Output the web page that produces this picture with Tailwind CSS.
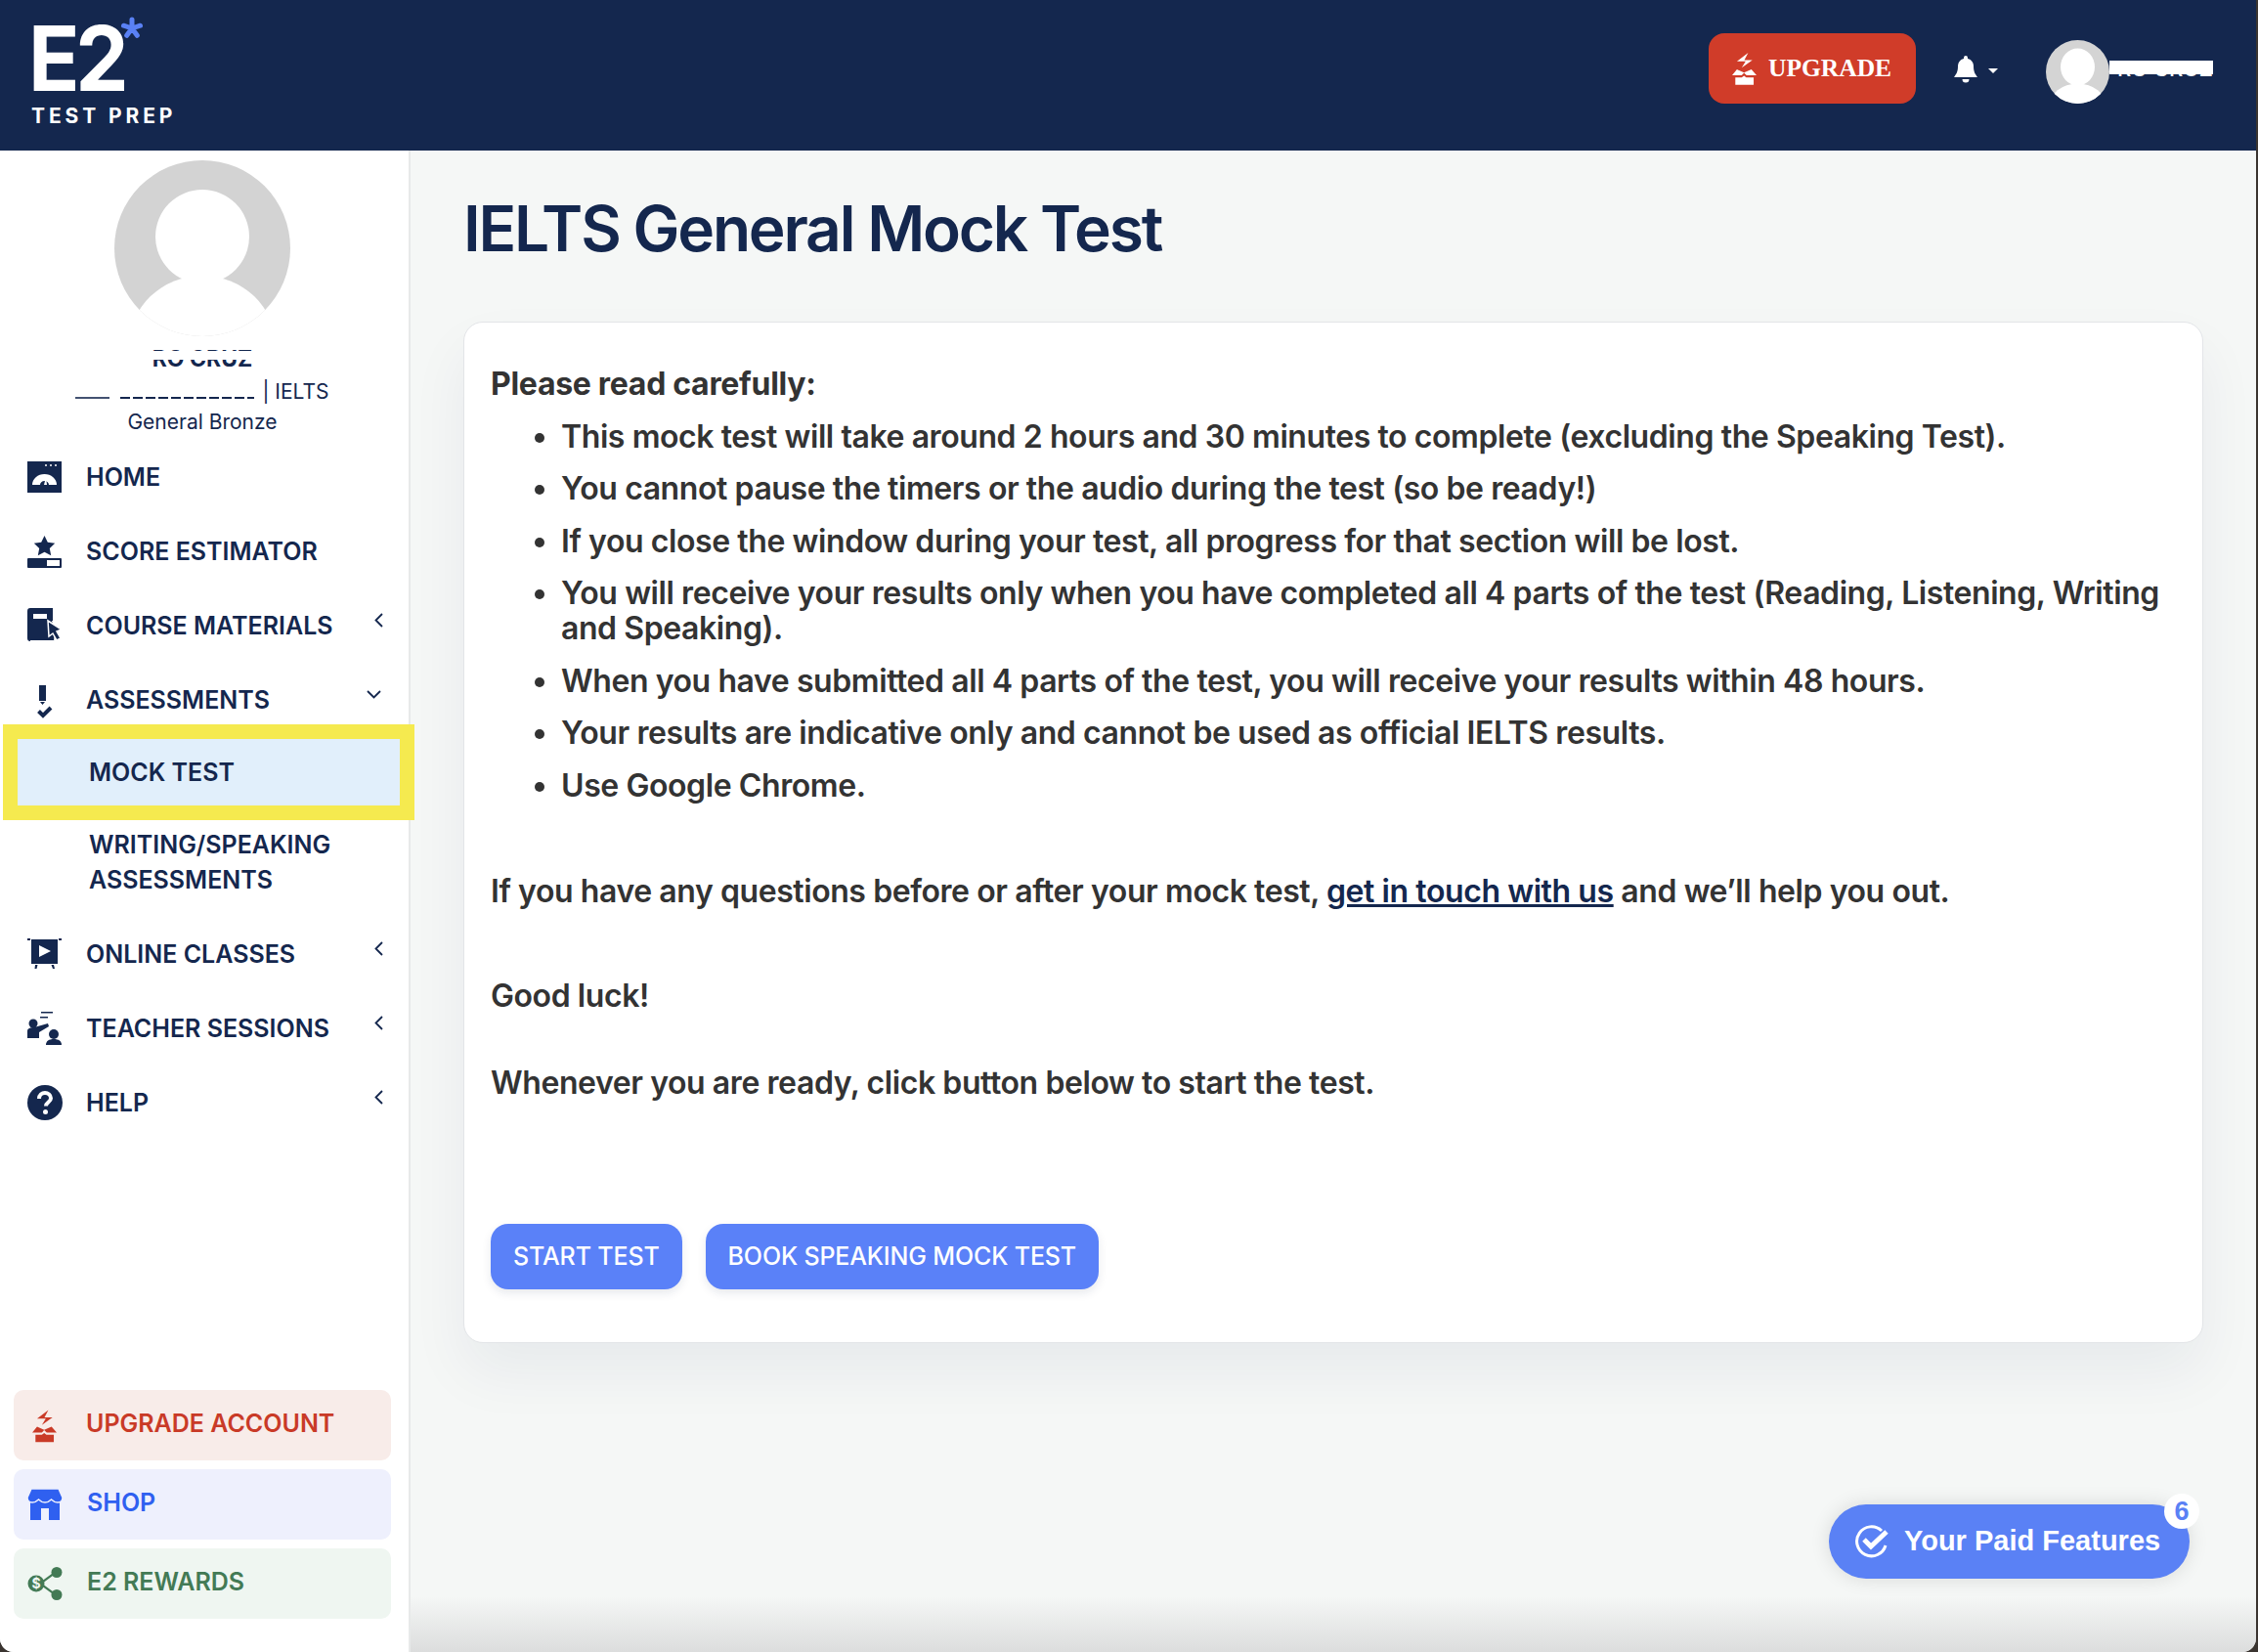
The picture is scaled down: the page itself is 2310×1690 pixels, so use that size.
<!DOCTYPE html>
<html lang="en">
<head>
<meta charset="utf-8">
<title>IELTS General Mock Test</title>
<script src="https://cdn.jsdelivr.net/npm/@tailwindcss/browser@4"></script>
</head>
<body class="w-[2310px] h-[1690px] overflow-hidden bg-[#3a3430] font-['Inter',sans-serif] text-[#14274e]">
<div class="relative flex h-full w-[2308px] flex-col overflow-hidden rounded-b-[14px] bg-[#f5f7f6]">
  <header class="flex h-[154px] shrink-0 items-start justify-between bg-[#14274e] text-white">
    <div class="relative ml-[31px] mt-[22px] flex flex-col">
      <div class="ml-[-2px] h-[76px] origin-left scale-x-[0.94] text-[92px] leading-[76px] font-bold tracking-[-4.500px]">E2</div>
      <svg class="absolute left-[92px] top-[-5px] h-[24px] w-[24px]" viewBox="0 0 24 24" fill="none" stroke="#5a81f5" stroke-width="5" stroke-linecap="round"><path d="M12 12V3M12 12l8.500-2.800M12 12l5.300 7.300M12 12l-5.300 7.300M12 12 3.500 9.200"/></svg>
      <div class="ml-[1px] mt-[9px] whitespace-nowrap text-[21px] leading-[24px] font-bold tracking-[3.900px]">TEST PREP</div>
    </div>
    <div class="flex items-start">
      <a class="mt-[34px] flex h-[72px] w-[212px] items-center rounded-[16px] bg-[#d03c29] pl-[24px] text-white">
        <svg class="mr-[12px] h-[36px] w-[25px]" viewBox="70 62 76 104" fill="#fff"><path d="M120 65 85 92h27l-12 20 33-24h-25zM70 135l15-18 22 10 23-10 16 18h-31l-8-7-7 7zM80 142h20l7-5 7 5h23v23H80z"/></svg>
        <span class="font-['Liberation_Serif',serif] text-[25.500px] font-bold leading-none">UPGRADE</span>
      </a>
      <div class="ml-[39px] mt-[57px] flex items-center">
        <svg class="h-[28px] w-[24px]" viewBox="0 0 24 28" fill="#fff"><path d="M12 0a2 2 0 0 1 2 2v1c4 1 6 4 6 8 0 6 2 8 4 11H0c2-3 4-5 4-11 0-4 2-7 6-8V2a2 2 0 0 1 2-2zM8.500 24h7a3.500 3.500 0 0 1-7 0z"/></svg>
        <span class="ml-[11px] mt-[2px] h-0 w-0 border-x-[5px] border-t-[5px] border-x-transparent border-t-white"></span>
      </div>
      <div class="ml-[49px] mr-[44px] mt-[41px] flex items-start">
        <svg class="h-[65px] w-[65px] shrink-0" viewBox="0 0 130 130"><clipPath id="ha"><circle cx="65" cy="65" r="65"/></clipPath><g clip-path="url(#ha)"><rect width="130" height="130" fill="#d4d4d4"/><ellipse cx="65" cy="55" rx="35" ry="38" fill="#fff"/><ellipse cx="65" cy="135" rx="58" ry="46" fill="#fff"/></g></svg>
        <div class="relative mt-[21px] h-[19px] w-[106px]">
          <span class="absolute left-[8px] top-[-3px] whitespace-nowrap text-[22px] leading-[22px] font-medium">RO CRUZ</span>
          <div class="absolute inset-x-0 top-0 h-[14px] bg-white"></div>
        </div>
      </div>
    </div>
  </header>
  <div class="flex min-h-0 flex-1">
    <aside class="relative flex w-[420px] shrink-0 flex-col border-r-2 border-[#e7e9e9] bg-white">
      <div class="flex w-[414px] flex-col items-center text-center">
        <svg class="mt-[10px] h-[180px] w-[180px]" viewBox="0 0 180 180"><clipPath id="sa"><circle cx="90" cy="90" r="90"/></clipPath><g clip-path="url(#sa)"><rect width="180" height="180" fill="#d3d3d3"/><circle cx="90" cy="78" r="48" fill="#fff"/><ellipse cx="90" cy="190" rx="75" ry="72" fill="#fff"/></g></svg>
        <div class="relative mt-[9px] h-[22px] w-[110px] overflow-hidden">
          <span class="absolute inset-x-0 bottom-[-7px] text-center text-[23px] leading-[30px] font-bold whitespace-nowrap">RO CRUZ</span>
          <div class="absolute inset-x-0 top-[6px] h-[9px] bg-white"></div>
        </div>
        <div class="mt-[10px] w-[300px] text-[21px] leading-[31px]"><span class="inline-block h-[2px] w-[35px] bg-[#14274e]/80 align-baseline"></span><span class="ml-[11px] mr-[8px] inline-block h-[2px] w-[137px] bg-[repeating-linear-gradient(90deg,#14274e_0,#14274e_10px,#ffffff_10px,#ffffff_13px)] align-baseline"></span>| IELTS General Bronze</div>
      </div>
      <nav class="mt-[3px] flex flex-col text-[25px] leading-[36px] font-semibold">
        <a class="flex h-[76px] items-center pl-[28px]"><svg class="mr-[25px] h-[32px] w-[35px] shrink-0" viewBox="0 0 35 32"><rect width="35" height="32" fill="#14274e"/><path d="M5 24a12.500 11 0 0 1 25 0h-8a4.500 4 0 0 0-9 0z" fill="#fff"/><path d="M17 24l2-8 1 8z" fill="#fff"/><circle cx="19" cy="4" r="1" fill="#fff"/><circle cx="24" cy="4" r="1" fill="#fff"/><circle cx="29" cy="4" r="1" fill="#fff"/></svg><span>HOME</span></a>
        <a class="flex h-[76px] items-center pl-[28px]"><svg class="mr-[25px] h-[33px] w-[35px] shrink-0" viewBox="0 0 35 33"><path d="M17.500 0l3.300 6.800 7.400 1-5.400 5.100 1.400 7.400-6.700-3.500-6.700 3.500 1.400-7.400-5.400-5.100 7.400-1z" fill="#14274e"/><rect y="23" width="35" height="10" rx="1" fill="#14274e"/><rect x="20" y="25" width="13" height="6" fill="#fff"/></svg><span>SCORE ESTIMATOR</span></a>
        <a class="relative flex h-[76px] items-center pl-[28px]"><svg class="mr-[24px] h-[36px] w-[36px] shrink-0" viewBox="0 0 36 36"><path d="M3 0h23v13l-1 0 3 10-1 11H3a3 3 0 0 1-3-3V3a3 3 0 0 1 3-3z" fill="#14274e"/><path d="M3 33h24v2H3z" fill="#fff"/><rect x="6" y="6" width="14" height="5" fill="#fff"/><path d="M21 13l14 9-5 2 4 7-4 2-4-7-4 3z" fill="#14274e" stroke="#fff" stroke-width="1.500"/></svg><span>COURSE MATERIALS</span><svg class="absolute right-[26px] top-[25px] h-[15px] w-[9px]" viewBox="0 0 9 15" fill="none" stroke="#14274e" stroke-width="1.800"><path d="M8 1 1.500 7.500 8 14"/></svg></a>
        <a class="relative flex h-[76px] items-center pl-[28px]"><svg class="mr-[25px] h-[34px] w-[35px] shrink-0 translate-y-[2px]" viewBox="0 0 35 34" fill="#14274e"><path d="M12 0h7v16h-7zM13 17h5l-2.500 3z"/><path d="M11.500 26.500l4.500 4.500 8-8" fill="none" stroke="#14274e" stroke-width="4"/></svg><span>ASSESSMENTS</span><svg class="absolute right-[28px] top-[28px] h-[9px] w-[15px]" viewBox="0 0 15 9" fill="none" stroke="#14274e" stroke-width="1.800"><path d="M1 1l6.500 6.500L14 1"/></svg></a>
        <div class="relative z-10 ml-[3px] mt-[-13px] flex h-[98px] w-[421px] items-center border-[15px] border-[#f5ea4f] bg-[#e1effb] pl-[73px]">MOCK TEST</div>
        <a class="block h-[99px] pl-[91px] pt-[7px]">WRITING/SPEAKING<br>ASSESSMENTS</a>
        <a class="relative flex h-[76px] items-center pl-[28px]"><svg class="mr-[25px] h-[32px] w-[35px] shrink-0" viewBox="0 0 35 32"><rect x="4" y="1" width="27" height="25" fill="#14274e"/><rect y="0" width="3" height="2" fill="#14274e"/><rect x="32" y="0" width="3" height="2" fill="#14274e"/><path d="M12 7l12 6-12 6z" fill="#fff"/><path d="M8 27h2.500l-1 4H7.500zM24.500 27H27l1 4h-2z" fill="#14274e"/></svg><span>ONLINE CLASSES</span><svg class="absolute right-[26px] top-[25px] h-[15px] w-[9px]" viewBox="0 0 9 15" fill="none" stroke="#14274e" stroke-width="1.800"><path d="M8 1 1.500 7.500 8 14"/></svg></a>
        <a class="relative flex h-[76px] items-center pl-[28px]"><svg class="mr-[25px] h-[34px] w-[35px] shrink-0" viewBox="0 0 35 34" fill="#14274e"><rect x="14" y="0" width="12" height="1.500"/><rect x="13" y="5" width="8" height="1.500"/><circle cx="6" cy="12" r="4.500"/><path d="M0 27V20c0-3 3-4 7-4l14-4 1 3-10 6v6z"/><circle cx="27" cy="23" r="5"/><path d="M19 34c0-4 3-6 8-6s8 2 8 6z"/></svg><span>TEACHER SESSIONS</span><svg class="absolute right-[26px] top-[25px] h-[15px] w-[9px]" viewBox="0 0 9 15" fill="none" stroke="#14274e" stroke-width="1.800"><path d="M8 1 1.500 7.500 8 14"/></svg></a>
        <a class="relative flex h-[76px] items-center pl-[28px]"><svg class="mr-[24px] h-[36px] w-[36px] shrink-0" viewBox="0 0 36 36"><circle cx="18" cy="18" r="18" fill="#14274e"/><path d="M12 14c0-4 3-6 6-6s6 2 6 5.500c0 4-5 4-5 8" fill="none" stroke="#fff" stroke-width="4"/><circle cx="18.500" cy="27.500" r="2.500" fill="#fff"/></svg><span>HELP</span><svg class="absolute right-[26px] top-[25px] h-[15px] w-[9px]" viewBox="0 0 9 15" fill="none" stroke="#14274e" stroke-width="1.800"><path d="M8 1 1.500 7.500 8 14"/></svg></a>
      </nav>
      <div class="absolute left-[14px] top-[1268px] flex w-[386px] flex-col gap-[9px] text-[25px] font-semibold">
        <a class="flex h-[72px] items-center rounded-[10px] bg-[#f8ece9] pl-[19px] text-[#c93a27]"><svg class="mr-[30px] h-[35px] w-[25px] shrink-0" viewBox="70 62 76 104" fill="#c93a27"><path d="M120 65 85 92h27l-12 20 33-24h-25zM70 135l15-18 22 10 23-10 16 18h-31l-8-7-7 7zM80 142h20l7-5 7 5h23v23H80z"/></svg><span class="mb-[3px]">UPGRADE ACCOUNT</span></a>
        <a class="flex h-[72px] items-center rounded-[10px] bg-[#eef0fd] pl-[14px] text-[#2f60f0]"><svg class="mr-[25px] h-[32px] w-[36px] shrink-0" viewBox="0 0 36 32" fill="#2f60f0"><path d="M3 10h30v22H22V20h-8v12H3z"/><path d="M4 0H32L36 9C36 12 34 14 31 14C28 14 26 12.500 24.500 11C23 12.500 21 14 18 14C15 14 13 12.500 11.500 11C10 12.500 8 14 5 14C2 14 0 12 0 9Z" stroke="#eef0fd" stroke-width="1.500"/></svg><span class="mb-[3px]">SHOP</span></a>
        <a class="flex h-[72px] items-center rounded-[10px] bg-[#eff6f1] pl-[14px] text-[#437a55]"><svg class="mr-[25px] h-[34px] w-[36px] shrink-0" viewBox="0 0 36 34" fill="#437a55"><circle cx="9" cy="17" r="8.500"/><circle cx="30" cy="5.500" r="5.500"/><circle cx="30" cy="28.500" r="5.500"/><path d="M14 15 29 4l1 2-15 11zM15 17l15 11-1 2-15-11z"/><text x="9" y="22" font-size="14" font-weight="700" text-anchor="middle" fill="#eff6f1">$</text></svg><span class="mb-[3px]">E2 REWARDS</span></a>
      </div>
    </aside>
    <main class="flex-1 pl-[54px] pr-[54px]">
      <h1 class="mt-[41px] text-[64px] leading-[78px] font-semibold tracking-[-2.200px]">IELTS General Mock Test</h1>
      <section class="mt-[56px] h-[1045px] rounded-[20px] border border-[#e3e5e8] bg-white pl-[27px] pr-[30px] pt-[45px] text-[32px] leading-[36px] font-semibold tracking-[-0.420px] text-[#333333] shadow-[0_30px_60px_rgba(20,39,78,0.06)]">
        <p class="font-bold tracking-[-0.300px]">Please read carefully:</p>
        <ul class="mt-[17.500px] flex list-disc flex-col gap-[17.500px] pl-[72px]">
          <li>This mock test will take around 2 hours and 30 minutes to complete (excluding the Speaking Test).</li>
          <li>You cannot pause the timers or the audio during the test (so be ready!)</li>
          <li>If you close the window during your test, all progress for that section will be lost.</li>
          <li>You will receive your results only when you have completed all 4 parts of the test (Reading, Listening, Writing and Speaking).</li>
          <li>When you have submitted all 4 parts of the test, you will receive your results within 48 hours.</li>
          <li>Your results are indicative only and cannot be used as official IELTS results.</li>
          <li>Use Google Chrome.</li>
        </ul>
        <p class="mt-[72px]">If you have any questions before or after your mock test, <a class="text-[#14274e] underline">get in touch with us</a> and we’ll help you out.</p>
        <p class="mt-[71px]">Good luck!</p>
        <p class="mt-[53px]">Whenever you are ready, click button below to start the test.</p>
        <div class="mt-[126px] flex gap-[24px] text-[25px] font-medium tracking-[-0.150px] text-white">
          <a class="flex h-[67px] items-center rounded-[18px] bg-[#5a81f8] px-[23px] shadow-[0_4px_10px_rgba(20,39,78,0.1)]">START TEST</a>
          <a class="flex h-[67px] items-center rounded-[18px] bg-[#5a81f8] px-[23px] shadow-[0_4px_10px_rgba(20,39,78,0.1)]">BOOK SPEAKING MOCK TEST</a>
        </div>
      </section>
    </main>
  </div>
  <div class="pointer-events-none absolute bottom-0 left-[420px] right-0 h-[57px] bg-gradient-to-t from-[#dcdddd] to-transparent"></div>
  <a class="absolute left-[1871px] top-[1539px] flex h-[76px] w-[369px] items-center rounded-full bg-[#5a81f5] pl-[27px] font-['Liberation_Sans',sans-serif] text-[29px] font-bold text-white shadow-[0_0_20px_rgba(0,0,0,0.12)]">
    <svg class="mr-[14px] h-[34px] w-[36px]" viewBox="0 0 36 34" fill="none" stroke="#fff"><path d="M27 6A15 15 0 1 0 31 21" stroke-width="3"/><path d="M9 15l7 7L32 7" stroke-width="5"/></svg>
    <span>Your Paid Features</span>
    <span class="absolute right-[-10px] top-[-11px] flex h-[36px] w-[36px] items-center justify-center rounded-full bg-white font-['Liberation_Sans',sans-serif] text-[27px] font-bold text-[#5a81f5]">6</span>
  </a>
</div>
</body>
</html>
